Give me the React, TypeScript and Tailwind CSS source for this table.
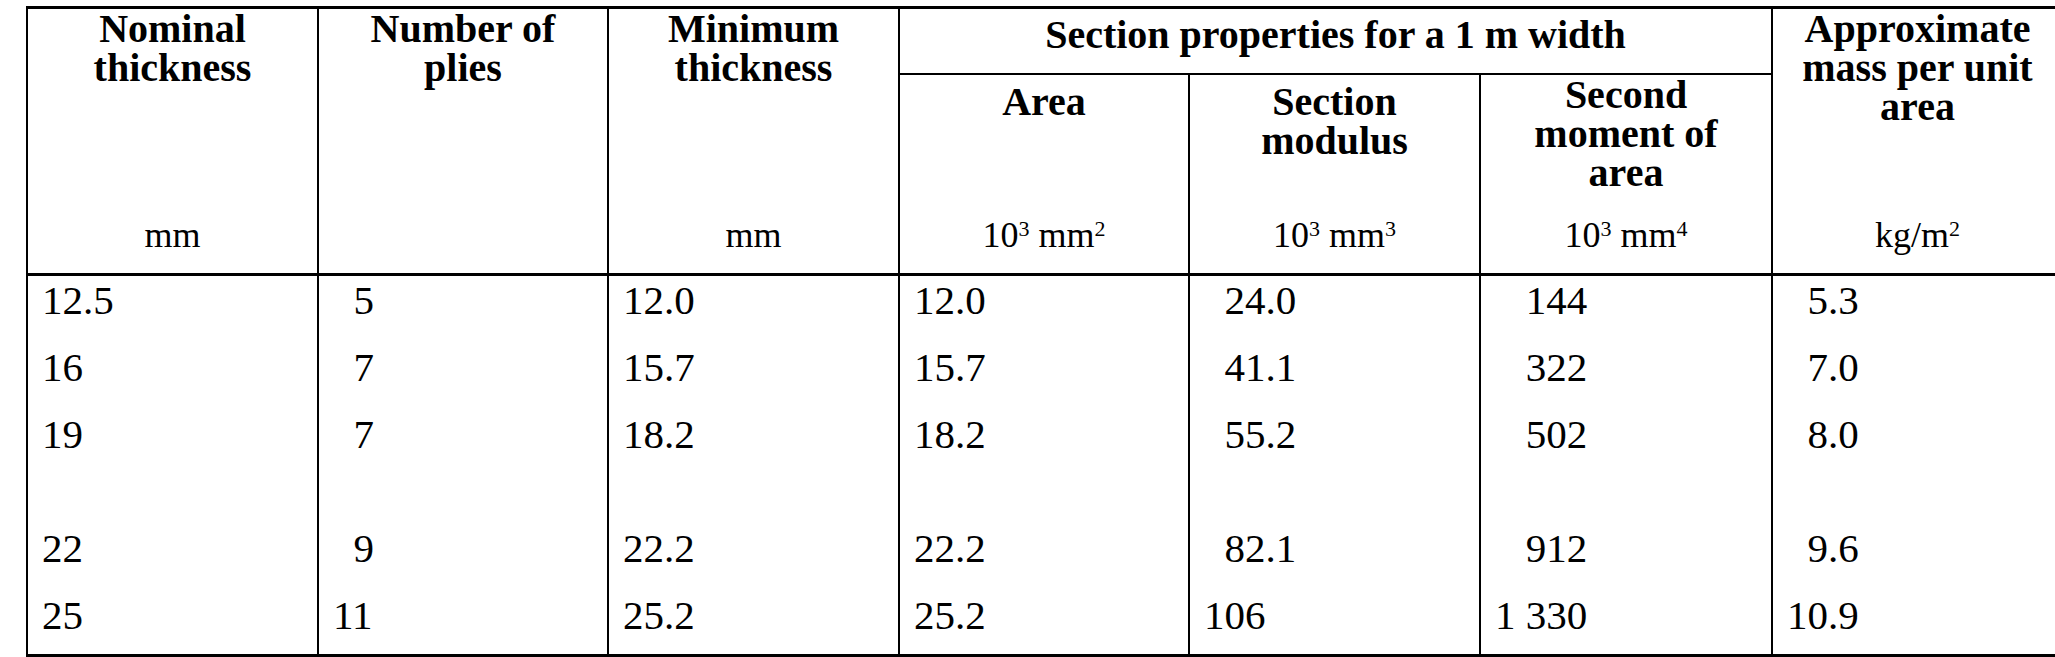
const grid = "grid grid-cols-[291px_290px_291px_290px_291px_292px_291px]";

type Cell = { pad?: string; text: string };

const rows: { height: string; cells: Cell[] }[] = [
	{
		height: "h-[67px]",
		cells: [
			{ text: "12.5" },
			{ pad: "1", text: "5" },
			{ text: "12.0" },
			{ text: "12.0" },
			{ pad: "1", text: "24.0" },
			{ pad: "1 ", text: "144" },
			{ pad: "1", text: "5.3" },
		],
	},
	{
		height: "h-[67px]",
		cells: [
			{ text: "16" },
			{ pad: "1", text: "7" },
			{ text: "15.7" },
			{ text: "15.7" },
			{ pad: "1", text: "41.1" },
			{ pad: "1 ", text: "322" },
			{ pad: "1", text: "7.0" },
		],
	},
	{
		height: "h-[114px]",
		cells: [
			{ text: "19" },
			{ pad: "1", text: "7" },
			{ text: "18.2" },
			{ text: "18.2" },
			{ pad: "1", text: "55.2" },
			{ pad: "1 ", text: "502" },
			{ pad: "1", text: "8.0" },
		],
	},
	{
		height: "h-[67px]",
		cells: [
			{ text: "22" },
			{ pad: "1", text: "9" },
			{ text: "22.2" },
			{ text: "22.2" },
			{ pad: "1", text: "82.1" },
			{ pad: "1 ", text: "912" },
			{ pad: "1", text: "9.6" },
		],
	},
	{
		height: "h-[63px]",
		cells: [
			{ text: "25" },
			{ text: "11" },
			{ text: "25.2" },
			{ text: "25.2" },
			{ text: "106" },
			{ text: "1 330" },
			{ text: "10.9" },
		],
	},
];

function Unit({ children }: { children?: React.ReactNode }) {
	return (
		<div className="pb-[18px] text-[36px] font-normal leading-[40px] whitespace-nowrap">
			{children}
		</div>
	);
}

function Sup({ children }: { children: React.ReactNode }) {
	return <sup className="text-[22px]">{children}</sup>;
}

function HeadCell({
	title,
	unit,
	className = "",
}: {
	title: React.ReactNode;
	unit?: React.ReactNode;
	className?: string;
}) {
	return (
		<div
			className={`flex flex-col items-center justify-between border-r-2 border-black text-center ${className}`}
		>
			<div className="font-bold">{title}</div>
			<Unit>{unit}</Unit>
		</div>
	);
}

export default function App() {
	return (
		<div className="h-[657px] w-[2055px] overflow-hidden bg-white pl-[26px] pt-[6px] font-['Liberation_Serif','Times_New_Roman',serif] text-black">
			<div className="w-[2037px] border-l-2 border-t-[3px] border-black">
				<div
					className={`${grid} grid-rows-[66px_198px] border-b-[3px] border-black text-[40px] leading-[39px]`}
				>
					<HeadCell
						className="row-span-2"
						title={
							<>
								Nominal
								<br />
								thickness
							</>
						}
						unit="mm"
					/>
					<HeadCell
						className="row-span-2"
						title={
							<>
								Number of
								<br />
								plies
							</>
						}
					/>
					<HeadCell
						className="row-span-2"
						title={
							<>
								Minimum
								<br />
								thickness
							</>
						}
						unit="mm"
					/>
					<div className="col-span-3 border-b-2 border-r-2 border-black pt-[6px] text-center font-bold">
						Section properties for a 1 m width
					</div>
					<HeadCell
						className="row-span-2"
						title={
							<>
								Approximate
								<br />
								mass per unit
								<br />
								area
							</>
						}
						unit={
							<>
								kg/m<Sup>2</Sup>
							</>
						}
					/>
					<HeadCell
						className="pt-[7px]"
						title="Area"
						unit={
							<>
								10<Sup>3</Sup> mm<Sup>2</Sup>
							</>
						}
					/>
					<HeadCell
						className="pt-[7px]"
						title={
							<>
								Section
								<br />
								modulus
							</>
						}
						unit={
							<>
								10<Sup>3</Sup> mm<Sup>3</Sup>
							</>
						}
					/>
					<HeadCell
						title={
							<>
								Second
								<br />
								moment of
								<br />
								area
							</>
						}
						unit={
							<>
								10<Sup>3</Sup> mm<Sup>4</Sup>
							</>
						}
					/>
				</div>

				<div className="border-b-[3px] border-black text-[41px] leading-[48px]">
					{rows.map((row, i) => (
						<div key={i} className={`${grid} ${row.height}`}>
							{row.cells.map((cell, j) => (
								<div
									key={j}
									className="whitespace-pre border-r-2 border-black pl-[14px]"
								>
									{cell.pad && <span className="invisible">{cell.pad}</span>}
									{cell.text}
								</div>
							))}
						</div>
					))}
				</div>
			</div>
		</div>
	);
}
